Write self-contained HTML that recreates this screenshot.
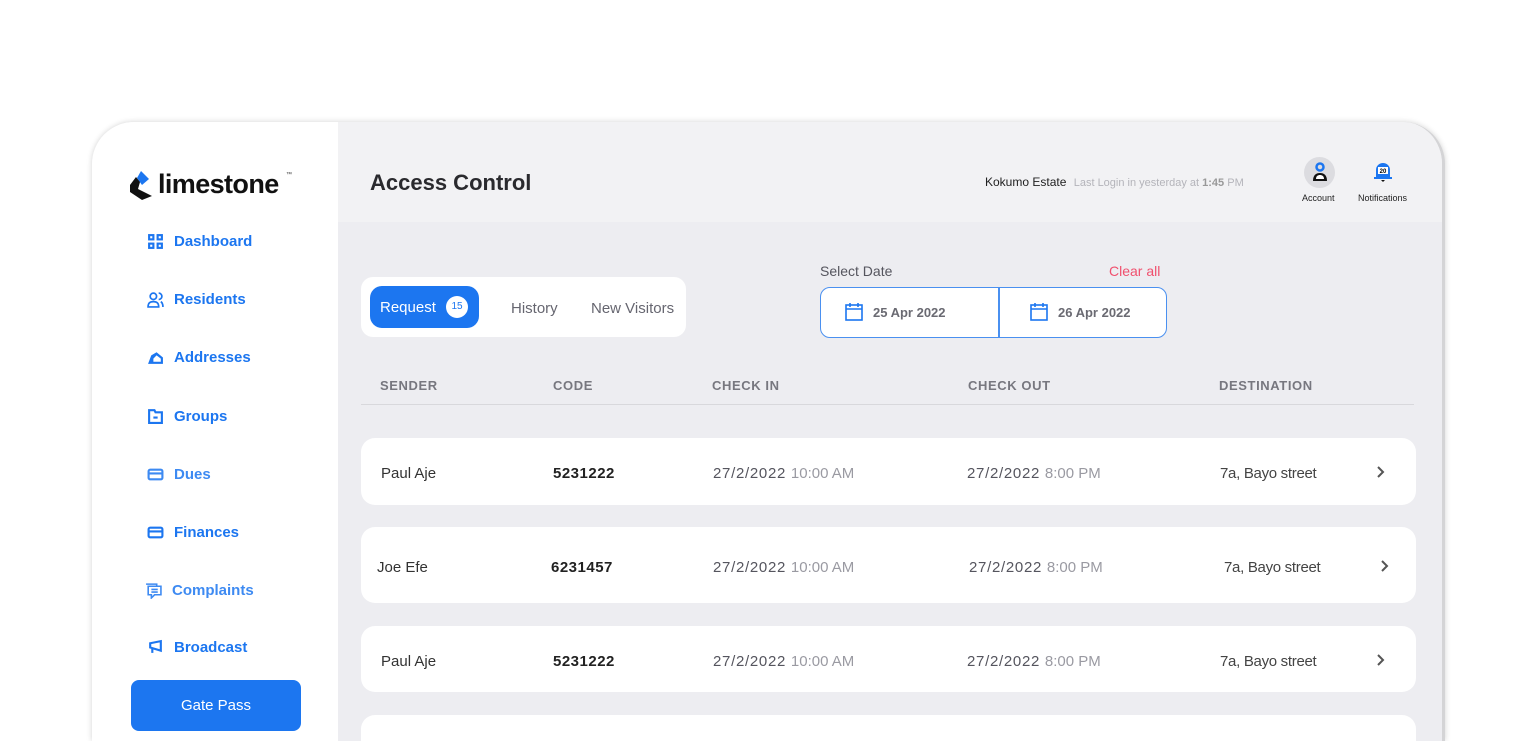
<!DOCTYPE html>
<html><head><meta charset="utf-8"><style>
*{box-sizing:border-box;margin:0;padding:0}
html,body{width:1536px;height:741px;overflow:hidden}
body{background:#fff;position:relative;font-family:"Liberation Sans",sans-serif}
.abs{position:absolute}
.frame{left:92px;top:122px;width:1353px;height:619px;border-radius:42px 42px 0 0;background:#ededf1;overflow:hidden;box-shadow:0 0 6px rgba(0,0,0,.18);border-right:3px solid #d4d4d6}
.side{left:0;top:0;width:246px;height:100%;background:#fff}
.hdr{left:246px;top:0;right:0;height:100px;background:#f2f2f4}
.nav{position:absolute;left:55px;color:#1c76f0;font-size:15px;font-weight:bold;display:flex;align-items:center;gap:10px}
.nav svg{width:17px;height:17px}
.row{position:absolute;left:361px;width:1055px;background:#fff;border-radius:14px}
.t{position:absolute;font-size:15px;color:#333}
.th{position:absolute;top:378px;font-size:13px;font-weight:bold;color:#77777f;letter-spacing:.6px}
.dt{color:#55555e;letter-spacing:.7px}
.tm{color:#9a9aa2;letter-spacing:0}
.chev{position:absolute;width:9px;height:12px}
</style></head><body>
<div class="abs frame">
 <div class="abs side"></div>
 <div class="abs hdr"></div>
</div>
<!-- logo -->
<svg class="abs" style="left:129px;top:170px" width="26" height="32" viewBox="0 0 26 32"><path d="M12 1 L20 9 L13 15 L8 8 Z" fill="#1c76f0"/><path d="M7 7 L1 15 L1 22 L13 30 L23 26 L9 19 L11 12 Z" fill="#111"/></svg>
<div class="abs" style="left:158px;top:169px;font-size:27px;font-weight:bold;color:#111;letter-spacing:-0.6px">limestone</div>
<div class="abs" style="left:286px;top:172px;font-size:6px;color:#333">™</div>
<!-- nav -->
<div class="nav" style="top:233px;left:147px"><svg viewBox="0 0 16 16" fill="none" stroke="#1c76f0" stroke-width="2"><rect x="2" y="2" width="4" height="4"/><rect x="10" y="2" width="4" height="4"/><rect x="2" y="10" width="4" height="4"/><rect x="10" y="10" width="4" height="4"/></svg>Dashboard</div>
<div class="nav" style="top:291px;left:147px"><svg viewBox="0 0 16 16" fill="none" stroke="#1c76f0" stroke-width="1.6"><circle cx="6" cy="5" r="3"/><path d="M1 15c0-4 2-5 5-5s5 1 5 5z M11 2a3 3 0 0 1 0 6 M13 10c1.5 1 2 2.5 2 5"/></svg>Residents</div>
<div class="nav" style="top:349px;left:147px"><svg viewBox="0 0 16 16" fill="#1c76f0"><path d="M1 14 L4 6 L9 3 L15 8 L15 14 Z M6 12h7V9L9 6 6 9z" fill-rule="evenodd"/></svg>Addresses</div>
<div class="nav" style="top:408px;left:147px"><svg viewBox="0 0 16 16" fill="none" stroke="#1c76f0" stroke-width="2"><path d="M2 2h5l1 2h6v10H2z M6 9h4"/></svg>Groups</div>
<div class="nav" style="top:466px;left:147px;opacity:.85"><svg viewBox="0 0 16 16" fill="none" stroke="#1c76f0" stroke-width="2"><rect x="1.5" y="3.5" width="13" height="9" rx="1.5"/><path d="M2 7h12"/></svg>Dues</div>
<div class="nav" style="top:524px;left:147px"><svg viewBox="0 0 16 16" fill="none" stroke="#1c76f0" stroke-width="2"><rect x="1.5" y="3.5" width="13" height="9" rx="1.5"/><path d="M2 7h12"/></svg>Finances</div>
<div class="nav" style="top:582px;left:145px;opacity:.85"><svg viewBox="0 0 16 16" fill="none" stroke="#1c76f0" stroke-width="1.5"><path d="M1 2h10v2 M3 4h12v8H9l-3 3v-3H3z M6 7h6 M6 9.5h6"/></svg>Complaints</div>
<div class="nav" style="top:639px;left:147px"><svg viewBox="0 0 16 16" fill="none" stroke="#1c76f0" stroke-width="2"><path d="M3 4l10-2v9L3 8z M5 8v5"/></svg>Broadcast</div>
<div class="abs" style="left:131px;top:680px;width:170px;height:51px;border-radius:8px;background:#1c76f0;color:#fff;font-size:15px;text-align:center;line-height:51px">Gate Pass</div>
<!-- header -->
<div class="abs" style="left:370px;top:170px;font-size:22px;font-weight:bold;color:#2a2a2e">Access Control</div>
<div class="abs" style="left:985px;top:175px;font-size:12px;color:#222">Kokumo Estate <span style="color:#b4b4ba;font-size:11px;margin-left:4px">Last Login in yesterday at <b style="color:#999">1:45</b> PM</span></div>
<div class="abs" style="left:1304px;top:157px;width:31px;height:31px;border-radius:50%;background:#dcdce0"></div>
<svg class="abs" style="left:1310px;top:161px" width="20" height="22" viewBox="0 0 20 22"><circle cx="10" cy="6" r="3.5" fill="none" stroke="#1c76f0" stroke-width="2.5"/><path d="M3 20c0-6 3-8 7-8s7 2 7 8z" fill="#111"/><path d="M6 18c0-3 2-4 4-4s4 1 4 4z" fill="#fff"/></svg>
<div class="abs" style="left:1302px;top:193px;font-size:9px;color:#222">Account</div>
<svg class="abs" style="left:1373px;top:161px" width="20" height="22" viewBox="0 0 20 22"><path d="M3 16V9a7 7 0 0 1 14 0v7h2v2H1v-2z" fill="#1c76f0"/><rect x="5" y="6" width="10" height="7" fill="#fff"/><text x="10" y="12" font-size="6" text-anchor="middle" font-family="Liberation Sans" font-weight="bold">20</text><path d="M8 19h4l-2 2z" fill="#111"/></svg>
<div class="abs" style="left:1358px;top:193px;font-size:9px;color:#222">Notifications</div>
<!-- tabs -->
<div class="abs" style="left:361px;top:277px;width:325px;height:60px;border-radius:12px;background:#fff"></div>
<div class="abs" style="left:370px;top:286px;width:109px;height:42px;border-radius:12px;background:#1c76f0;color:#fff;font-size:15px;line-height:44px;padding-left:10px">Request<span style="position:absolute;left:76px;top:10px;width:22px;height:22px;border-radius:50%;background:#fff;color:#1c76f0;font-size:10px;line-height:22px;text-align:center">15</span></div>
<div class="abs" style="left:511px;top:300px;font-size:15px;color:#666670">History</div>
<div class="abs" style="left:591px;top:300px;font-size:15px;color:#666670">New Visitors</div>
<!-- date -->
<div class="abs" style="left:820px;top:263px;font-size:14px;color:#55555e">Select Date</div>
<div class="abs" style="left:1109px;top:263px;font-size:14px;color:#f0506e">Clear all</div>
<div class="abs" style="left:820px;top:287px;width:347px;height:51px;border:1.5px solid #4a90f0;border-radius:10px;background:#fff"></div>
<div class="abs" style="left:998px;top:288px;width:1.5px;height:49px;background:#4a90f0"></div>
<svg class="abs" style="left:845px;top:302px" width="18" height="19" viewBox="0 0 18 19" fill="none" stroke="#1c76f0" stroke-width="1.6"><rect x="1" y="3" width="16" height="15"/><path d="M1 7h16 M5 1v4 M13 1v4"/></svg>
<div class="abs" style="left:873px;top:305px;font-size:13px;font-weight:bold;color:#6a6a72">25 Apr 2022</div>
<svg class="abs" style="left:1030px;top:302px" width="18" height="19" viewBox="0 0 18 19" fill="none" stroke="#1c76f0" stroke-width="1.6"><rect x="1" y="3" width="16" height="15"/><path d="M1 7h16 M5 1v4 M13 1v4"/></svg>
<div class="abs" style="left:1058px;top:305px;font-size:13px;font-weight:bold;color:#6a6a72">26 Apr 2022</div>
<!-- table header -->
<div class="th" style="left:380px">SENDER</div>
<div class="th" style="left:553px">CODE</div>
<div class="th" style="left:712px">CHECK IN</div>
<div class="th" style="left:968px">CHECK OUT</div>
<div class="th" style="left:1219px">DESTINATION</div>
<div class="abs" style="left:361px;top:404px;width:1053px;height:1px;background:#d8d8dc"></div>
<!-- rows -->
<div class="row" style="top:438px;height:67px"></div>
<div class="row" style="top:527px;height:76px"></div>
<div class="row" style="top:626px;height:66px"></div>
<div class="row" style="top:715px;height:60px"></div>

<div class="t" style="left:381px;top:465px">Paul Aje</div>
<div class="t" style="left:553px;top:465px;font-weight:bold;color:#222;letter-spacing:.5px">5231222</div>
<div class="t dt" style="left:713px;top:465px">27/2/2022 <span class="tm">10:00 AM</span></div>
<div class="t dt" style="left:967px;top:465px">27/2/2022 <span class="tm">8:00 PM</span></div>
<div class="t" style="left:1220px;top:465px;color:#444;letter-spacing:-.3px">7a, Bayo street</div>
<svg class="chev" style="left:1376px;top:466px" viewBox="0 0 9 12" fill="none" stroke="#555" stroke-width="2"><path d="M2 1l5 5-5 5"/></svg>

<div class="t" style="left:377px;top:559px">Joe Efe</div>
<div class="t" style="left:551px;top:559px;font-weight:bold;color:#222;letter-spacing:.5px">6231457</div>
<div class="t dt" style="left:713px;top:559px">27/2/2022 <span class="tm">10:00 AM</span></div>
<div class="t dt" style="left:969px;top:559px">27/2/2022 <span class="tm">8:00 PM</span></div>
<div class="t" style="left:1224px;top:559px;color:#444;letter-spacing:-.3px">7a, Bayo street</div>
<svg class="chev" style="left:1380px;top:560px" viewBox="0 0 9 12" fill="none" stroke="#555" stroke-width="2"><path d="M2 1l5 5-5 5"/></svg>

<div class="t" style="left:381px;top:653px">Paul Aje</div>
<div class="t" style="left:553px;top:653px;font-weight:bold;color:#222;letter-spacing:.5px">5231222</div>
<div class="t dt" style="left:713px;top:653px">27/2/2022 <span class="tm">10:00 AM</span></div>
<div class="t dt" style="left:967px;top:653px">27/2/2022 <span class="tm">8:00 PM</span></div>
<div class="t" style="left:1220px;top:653px;color:#444;letter-spacing:-.3px">7a, Bayo street</div>
<svg class="chev" style="left:1376px;top:654px" viewBox="0 0 9 12" fill="none" stroke="#555" stroke-width="2"><path d="M2 1l5 5-5 5"/></svg>
</body></html>
